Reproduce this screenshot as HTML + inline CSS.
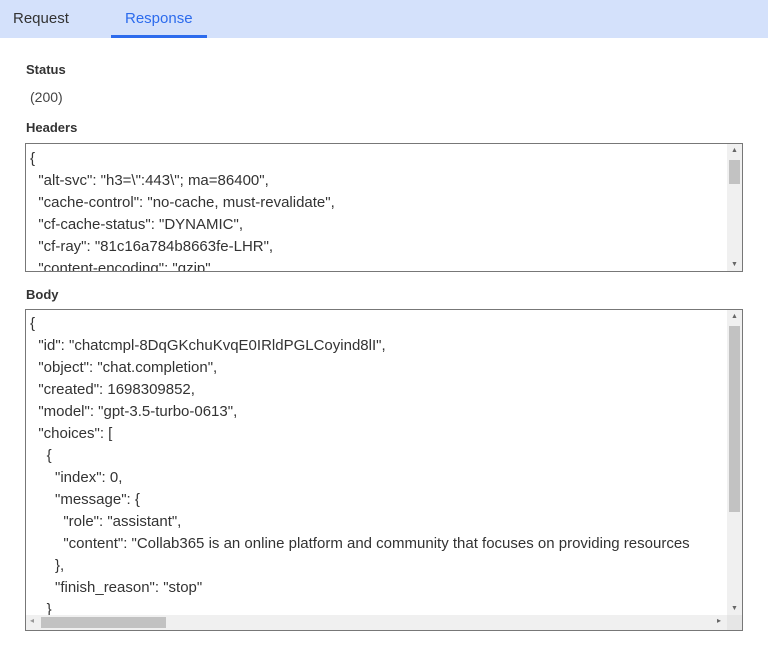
<!DOCTYPE html>
<html><head><style>
body{margin:0;width:768px;height:656px;background:#fff;font-family:"Liberation Sans",sans-serif;color:#333;position:relative;overflow:hidden}
.tabs{position:absolute;left:0;top:0;width:768px;height:38px;background:#d4e1fb}
.tab{position:absolute;top:10px;font-size:15px;color:#333}
.ul{position:absolute;left:111px;top:35px;width:96px;height:3px;background:#2c6bed}
.lbl{position:absolute;left:26px;font-size:13px;font-weight:bold;color:#333}
.box{position:absolute;left:25px;width:716px;border:1px solid #777;background:#fff;overflow:hidden}
.txt{position:absolute;left:4px;top:3px;font-size:15px;line-height:22px;white-space:pre;color:#333}
.vs{position:absolute;right:0;top:0;width:15px;bottom:0;background:#f0f0f0}
.thumb{position:absolute;left:2px;width:11px;background:#c2c2c2}
.arr{position:absolute;left:4px;font-size:7px;color:#666}
</style></head><body>
<div class="tabs"></div>
<div class="tab" style="left:13px">Request</div>
<div class="tab" style="left:125px;color:#2c6bed">Response</div>
<div class="ul"></div>
<div class="lbl" style="top:62px">Status</div>
<div style="position:absolute;left:30px;top:89px;font-size:14px;color:#444">(200)</div>
<div class="lbl" style="top:120px">Headers</div>
<div class="box" style="top:143px;height:127px">
<div class="txt" style="top:4px">{
  "alt-svc": "h3=\":443\"; ma=86400",
  "cache-control": "no-cache, must-revalidate",
  "cf-cache-status": "DYNAMIC",
  "cf-ray": "81c16a784b8663fe-LHR",
  "content-encoding": "gzip",</div>
<div class="vs"><div class="arr" style="top:3px">▲</div><div class="thumb" style="top:16px;height:24px"></div><div class="arr" style="bottom:3px">▼</div></div>
</div>
<div class="lbl" style="top:287px">Body</div>
<div class="box" style="top:309px;height:320px">
<div class="txt" style="top:3px">{
  "id": "chatcmpl-8DqGKchuKvqE0IRldPGLCoyind8lI",
  "object": "chat.completion",
  "created": 1698309852,
  "model": "gpt-3.5-turbo-0613",
  "choices": [
    {
      "index": 0,
      "message": {
        "role": "assistant",
        "content": "Collab365 is an online platform and community that focuses on providing resources
      },
      "finish_reason": "stop"
    }
  ]</div>
<div class="vs" style="bottom:15px"><div class="arr" style="top:3px">▲</div><div class="thumb" style="top:16px;height:186px"></div><div class="arr" style="bottom:3px">▼</div></div>
<div style="position:absolute;left:0;right:15px;bottom:0;height:15px;background:#f0f0f0"><div style="position:absolute;left:15px;top:2px;width:125px;height:11px;background:#c2c2c2"></div><div style="position:absolute;left:4px;top:1px;font-size:8px;color:#999">◂</div><div style="position:absolute;right:6px;top:1px;font-size:8px;color:#666">▸</div></div>
<div style="position:absolute;right:0;bottom:0;width:15px;height:15px;background:#e6e6e6"></div>
</div>
</body></html>
